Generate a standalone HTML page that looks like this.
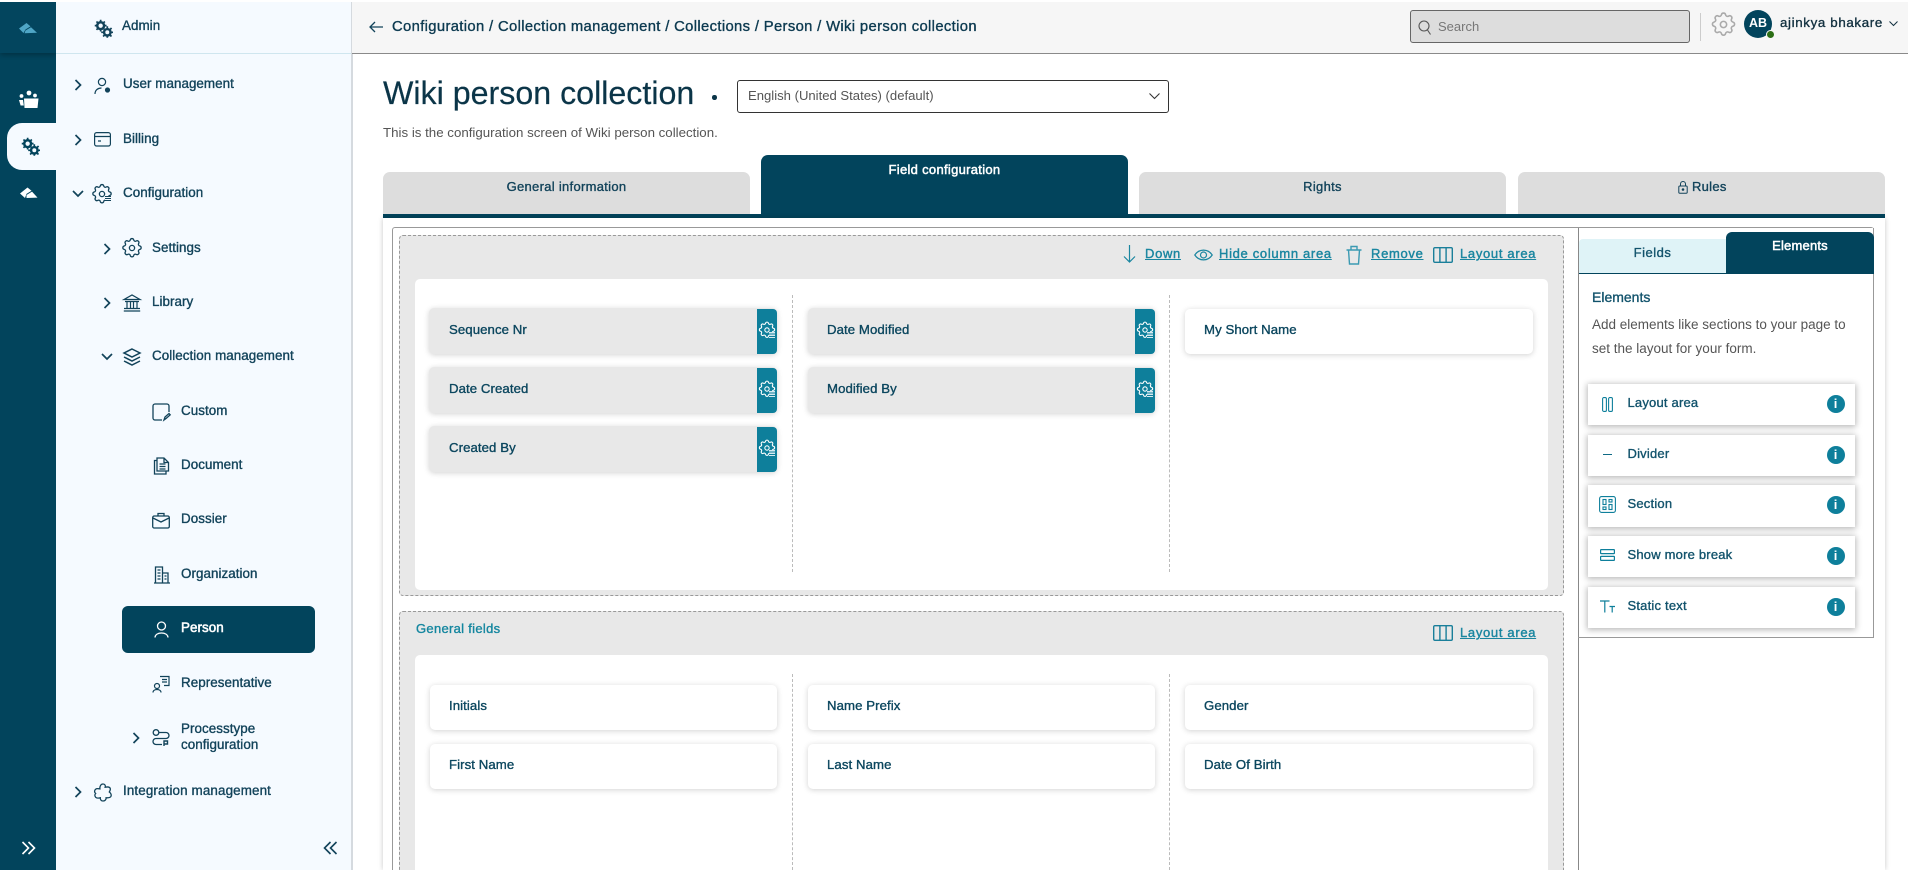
<!DOCTYPE html>
<html><head><meta charset="utf-8"><style>
*{box-sizing:border-box}
html,body{margin:0;padding:0;width:1908px;height:870px;overflow:hidden;background:#fff}
body{position:relative;font-family:"Liberation Sans",sans-serif;color:#0b465e}
.a{position:absolute}
.t{position:absolute;white-space:nowrap;line-height:20px;height:20px;-webkit-text-stroke:.35px currentColor}
.n{font-size:13.4px;color:#12435a;letter-spacing:.05px;margin-top:1px}
svg{position:absolute;overflow:visible;fill:none}
.fc{position:absolute;height:45px;background:#fff;border-radius:5px;box-shadow:0 1px 6px rgba(0,0,0,.18)}
.fc.g{background:#e8e8e8;height:46px}
.fc span{position:absolute;left:19px;top:11px;line-height:20px;font-size:13.2px;letter-spacing:.08px;color:#0b465e;-webkit-text-stroke:.35px currentColor;white-space:nowrap}
.fc.g span{left:20px;top:12px}
.st{position:absolute;right:0;top:1px;width:20px;height:45px;background:#0e7f9b;border-radius:0 4px 4px 0}
.st svg{left:-.5px;top:10.5px;color:#fff}
.st b{position:absolute;left:12px;top:23px;width:6px;height:6px;background:repeating-linear-gradient(#d5e9f0 0 1px,#0e7f9b 1px 1.6px)}
.ec{position:absolute;left:1588px;width:267px;height:41px;background:#fff;box-shadow:0 1px 6px 1px rgba(0,0,0,.28)}
.ec span{position:absolute;left:39.5px;top:9px;line-height:20px;font-size:13px;letter-spacing:.2px;color:#12536c;-webkit-text-stroke:.35px currentColor;white-space:nowrap}
.ec i{position:absolute;left:238.5px;top:11px;width:18px;height:18px;border-radius:50%;background:#0e7f9b;color:#fff;font:normal bold 13px/18px "Liberation Sans",sans-serif;text-align:center}
.tab{position:absolute;background:#ddd;border-radius:7px 7px 0 0;text-align:center;font-size:13px;letter-spacing:.3px;line-height:20px;color:#12435a;-webkit-text-stroke:.35px currentColor}
.lnk{position:absolute;white-space:nowrap;font-size:13px;line-height:20px;color:#1a86a0;text-decoration:underline;-webkit-text-stroke:.4px currentColor;letter-spacing:.68px}
.dash{position:absolute;border-left:1px dashed #bbb;width:0}
</style></head><body>
<svg width="0" height="0" style="position:absolute"><defs>
<symbol id="gear" viewBox="0 0 24 24"><path d="M10.3 3.9c.4-1.8 3-1.8 3.4 0a1.7 1.7 0 0 0 2.6 1.1c1.5-.9 3.3.8 2.4 2.4a1.7 1.7 0 0 0 1.1 2.6c1.8.4 1.8 3 0 3.4a1.7 1.7 0 0 0-1.1 2.6c.9 1.5-.8 3.3-2.4 2.4a1.7 1.7 0 0 0-2.6 1.1c-.4 1.8-3 1.8-3.4 0a1.7 1.7 0 0 0-2.6-1.1c-1.5.9-3.3-.8-2.4-2.4a1.7 1.7 0 0 0-1.1-2.6c-1.8-.4-1.8-3 0-3.4a1.7 1.7 0 0 0 1.1-2.6c-.9-1.5.8-3.3 2.4-2.4a1.7 1.7 0 0 0 2.6-1.1z" stroke="currentColor" stroke-width="1.3" fill="none"/><circle cx="12" cy="12" r="2.6" stroke="currentColor" stroke-width="1.3" fill="none"/></symbol>
<symbol id="gears" viewBox="0 0 20 20"><g stroke="currentColor" stroke-width="2.6" fill="none"><circle cx="7" cy="7" r="3.6"/><circle cx="14" cy="14" r="3.4"/><path stroke-width="1.8" d="M7 .8v2M7 11v2.2M.8 7h2M11.2 7h2M2.6 2.6l1.4 1.4M10 10l1.4 1.4M11.4 2.6L10 4M4 10l-1.4 1.4M14 7.6v2M14 18v1.8M7.6 14h2M18.4 14h1.6M9.5 9.5l1.4 1.4M17 17l1.4 1.4M18.5 9.5L17 11M11 17l-1.4 1.4"/></g></symbol>
<symbol id="lay" viewBox="0 0 20 16"><rect x=".7" y=".7" width="18.6" height="14.6" rx="1.2" stroke="currentColor" stroke-width="1.4" fill="none"/><path d="M6.9 1v14M13.1 1v14" stroke="currentColor" stroke-width="1.4"/></symbol>
</defs></svg>

<!-- rail -->
<div class="a" style="left:0;top:2px;width:56px;height:868px;background:#02445c"></div>
<div class="a" style="left:0;top:2px;width:56px;height:51px;background:#03455e;box-shadow:0 2px 5px rgba(0,0,0,.28)"></div>
<svg style="left:18px;top:22px" width="20" height="12" viewBox="0 0 20 12"><path d="M1 6.5L8.5 1l4 3.4L7.5 7.5 5.5 11z" fill="#4fa6c6"/><path d="M7.5 8.5l5.5-3.2 6 5.4-12.500.6z" fill="#4fa6c6"/></svg>
<svg style="left:18px;top:90px" width="21" height="19" viewBox="0 0 21 19"><circle cx="11" cy="3" r="2.4" fill="#fff"/><circle cx="3.5" cy="6" r="1.9" fill="#fff"/><circle cx="17" cy="5.5" r="1.9" fill="#fff"/><path d="M6 8.5h14.5l-1 9.5H6.5zM1 10h4l.8 5.5H2.600z" fill="#fff"/></svg>
<div class="a" style="left:7px;top:123px;width:49px;height:47px;background:#f5faff;border-radius:15px 0 0 15px"></div>
<svg style="left:21px;top:137px;color:#02445c" width="19" height="19"><use href="#gears"/></svg>
<svg style="left:19px;top:186px" width="19" height="13" viewBox="0 0 19 13"><path d="M1 7.5L8.5 1.5l4 3.2-5 3.2L6 12z" fill="#fff"/><path d="M7.5 9l5.5-3.4 5.500 6-11 .4z" fill="#fff"/></svg>
<svg style="left:21px;top:841px" width="15" height="14" viewBox="0 0 15 14" stroke="#fff" stroke-width="1.6"><path d="M1.5 1l6 6-6 6M7.5 1l6 6-6 6"/></svg>

<!-- nav -->
<div class="a" style="left:56px;top:2px;width:295px;height:868px;background:#f5faff"></div>
<div class="a" style="left:56px;top:53px;width:295px;height:1px;background:#cfe6ef"></div>
<div class="a" style="left:351px;top:2px;width:1.5px;height:868px;background:#d5dadf"></div>

<svg style="left:94px;top:19px;color:#12435a" width="19" height="19"><use href="#gears"/></svg>
<div class="t n" style="left:122px;top:15px">Admin</div>

<svg style="left:74px;top:79px" width="8" height="12" stroke="#12435a" stroke-width="1.7"><path d="M1.5 1l5 5-5 5"/></svg>
<svg style="left:94px;top:77px" width="18" height="18" viewBox="0 0 18 18" stroke="#12435a" stroke-width="1.2"><circle cx="8" cy="5" r="3.6"/><path d="M1 17c0-4 3-6 6.5-6"/><circle cx="13.5" cy="13" r="2" fill="#12435a"/></svg>
<div class="t n" style="left:123px;top:73px">User management</div>

<svg style="left:74px;top:134px" width="8" height="12" stroke="#12435a" stroke-width="1.7"><path d="M1.5 1l5 5-5 5"/></svg>
<svg style="left:94px;top:132px" width="17" height="15" viewBox="0 0 17 15" stroke="#12435a" stroke-width="1.2"><rect x=".6" y=".6" width="15.8" height="13.4" rx="2"/><path d="M1 4.5h15M4 9h3"/></svg>
<div class="t n" style="left:123px;top:128px">Billing</div>

<svg style="left:72px;top:190px" width="12" height="8" stroke="#12435a" stroke-width="1.7"><path d="M1 1l5 5 5-5"/></svg>
<svg style="left:90px;top:182px;color:#12435a" width="24" height="24"><use href="#gear"/></svg>
<div class="a" style="left:105px;top:196px;width:6px;height:6px;background:repeating-linear-gradient(#12435a 0 1px,#f5faff 1px 2px)"></div>
<div class="t n" style="left:123px;top:182px">Configuration</div>

<svg style="left:103px;top:243px" width="8" height="12" stroke="#12435a" stroke-width="1.7"><path d="M1.5 1l5 5-5 5"/></svg>
<svg style="left:120px;top:236px;color:#12435a" width="24" height="24"><use href="#gear"/></svg>
<div class="t n" style="left:152px;top:237px">Settings</div>

<svg style="left:103px;top:297px" width="8" height="12" stroke="#12435a" stroke-width="1.7"><path d="M1.5 1l5 5-5 5"/></svg>
<svg style="left:123px;top:294px" width="18" height="18" viewBox="0 0 18 18" stroke="#12435a" stroke-width="1.2"><path d="M1 5.5L9 1l8 4.5zM2 7.5h14M4 8v6M7.5 8v6M10.5 8v6M14 8v6M1 14.5h16M.8 17h16.4" /></svg>
<div class="t n" style="left:152px;top:291px">Library</div>

<svg style="left:101px;top:353px" width="12" height="8" stroke="#12435a" stroke-width="1.7"><path d="M1 1l5 5 5-5"/></svg>
<svg style="left:123px;top:348px" width="18" height="18" viewBox="0 0 18 18" stroke="#12435a" stroke-width="1.5"><path d="M9 1l8 4-8 4-8-4zM1 9l8 4 8-4M1 13l8 4 8-4"/></svg>
<div class="t n" style="left:152px;top:345px">Collection management</div>

<svg style="left:152px;top:403px" width="19" height="18" viewBox="0 0 19 18" stroke="#12435a" stroke-width="1.3"><path d="M17 9V3a2 2 0 0 0-2-2H3a2 2 0 0 0-2 2v12a2 2 0 0 0 2 2h7"/><path d="M12 17l1-3 4-3.5 1.2 1.3-4 3.6z"/></svg>
<div class="t n" style="left:181px;top:400px">Custom</div>

<svg style="left:153px;top:457px" width="17" height="18" viewBox="0 0 17 18" stroke="#12435a" stroke-width="1.3"><path d="M4 1h7l4.5 4.5V14H4zM11 1v4.5h4.5M4 3.5H1.5V17H13v-3M6.5 7h6M6.5 9.5h6M6.5 12h6"/></svg>
<div class="t n" style="left:181px;top:454px">Document</div>

<svg style="left:152px;top:512px" width="18" height="17" viewBox="0 0 18 17" stroke="#12435a" stroke-width="1.3"><rect x=".7" y="4" width="16.6" height="12" rx="1.5"/><path d="M1 6l8 4 8-4M6 4V1.5h6V4"/></svg>
<div class="t n" style="left:181px;top:508px">Dossier</div>

<svg style="left:153px;top:566px" width="17" height="18" viewBox="0 0 17 18" stroke="#12435a" stroke-width="1.3"><path d="M1 17h16M2.5 17V1h7v16M9.5 7h5.500v10M4.500 4h3M4.500 7h3M4.500 10h3M4.500 13h3M11.500 10h2M11.500 13h2"/></svg>
<div class="t n" style="left:181px;top:563px">Organization</div>

<div class="a" style="left:122px;top:606px;width:193px;height:47px;background:#02445c;border-radius:6px"></div>
<svg style="left:154px;top:621px" width="15" height="17" viewBox="0 0 15 17" stroke="#fff" stroke-width="1.3"><circle cx="7.500" cy="5" r="4"/><path d="M1 16.500c0-6 13-6 13 0"/></svg>
<div class="t n" style="left:181px;top:617px;color:#fff;-webkit-text-stroke:.55px #fff">Person</div>

<svg style="left:152px;top:675px" width="18" height="18" viewBox="0 0 18 18" stroke="#12435a" stroke-width="1.2"><path d="M8 1.500h9v9h-5M10 4.500h5M10 7h5"/><circle cx="5" cy="11" r="2.500"/><path d="M1 17.500c0-4 8-4 8 0"/></svg>
<div class="t n" style="left:181px;top:672px">Representative</div>

<svg style="left:132px;top:732px" width="8" height="12" stroke="#12435a" stroke-width="1.7"><path d="M1.500 1l5 5-5 5"/></svg>
<svg style="left:152px;top:729px" width="18" height="18" viewBox="0 0 18 18" stroke="#12435a" stroke-width="1.3"><circle cx="4" cy="3.500" r="2.800"/><path d="M7 3.500h7a3 3 0 0 1 0 6H4a3 3 0 0 0 0 6h6"/><path d="M12 17v-5h3.500v3H12" stroke-width="1.400"/></svg>
<div class="t n" style="left:181px;top:718px">Processtype</div>
<div class="t n" style="left:181px;top:734px">configuration</div>

<svg style="left:74px;top:786px" width="8" height="12" stroke="#12435a" stroke-width="1.7"><path d="M1.500 1l5 5-5 5"/></svg>
<svg style="left:94px;top:783px" width="18" height="19" viewBox="0 0 18 19" stroke="#12435a" stroke-width="1.300"><path d="M9 1c2 0 2.700 1.700 2.200 3.200 1.500-.3 4.300-.7 5 1.100.5 1.300-.3 2.700-.9 3.700 1.300 1 2.200 2.500 1.800 4-.5 2-3.400 1.900-5 1.800.2 1.500-.9 3.200-3 3.200s-3-1.700-2.800-3.200c-1.300.3-3.600.5-4.600-.5S.5 11.500 1.600 10.500c-1.200-1-1.500-3 0-4.300 1.200-1 3-.5 4.300-.3C5.500 3.200 7 1 9 1z"/></svg>
<div class="t n" style="left:123px;top:780px;letter-spacing:.13px">Integration management</div>

<svg style="left:323px;top:841px" width="15" height="14" viewBox="0 0 15 14" stroke="#12435a" stroke-width="1.600"><path d="M7.500 1l-6 6 6 6M13.500 1l-6 6 6 6"/></svg>

<!-- header -->
<div class="a" style="left:352px;top:2px;width:1556px;height:51px;background:#f6f6f6"></div>
<div class="a" style="left:352px;top:53px;width:1556px;height:1px;background:#8a8a8a"></div>
<svg style="left:369px;top:21px" width="14" height="12" viewBox="0 0 14 12" stroke="#12435a" stroke-width="1.300"><path d="M6 1L1 6l5 5M1 6h13"/></svg>
<div class="t" style="left:392px;top:17px;font-size:14.8px;letter-spacing:.35px;color:#0c3a50">Configuration / Collection management / Collections / Person / Wiki person collection</div>
<div class="a" style="left:1410px;top:10px;width:280px;height:33px;background:#ddd;border:1px solid #666;border-radius:3px"></div>
<svg style="left:1418px;top:20px" width="14" height="15" viewBox="0 0 14 15" stroke="#555" stroke-width="1.100"><circle cx="6" cy="6" r="5"/><path d="M9.500 10l3 4.500"/></svg>
<div class="t" style="left:1438px;top:17px;font-size:13px;color:#777;-webkit-text-stroke:0">Search</div>
<div class="a" style="left:1700px;top:13px;width:1px;height:28px;background:#ccc"></div>
<svg style="left:1708.5px;top:10px;color:#aaa" width="29" height="29"><use href="#gear"/></svg>
<div class="a" style="left:1744px;top:10px;width:28px;height:28px;border-radius:50%;background:#02445c;color:#fff;font-size:12.500px;font-weight:bold;line-height:27px;text-align:center">AB</div>
<div class="a" style="left:1766px;top:30px;width:9px;height:9px;border-radius:50%;background:#2c6e14;border:1px solid #f6f6f6"></div>
<div class="t" style="left:1780px;top:13px;font-size:13.300px;letter-spacing:.65px;color:#12303f">ajinkya bhakare</div>
<svg style="left:1889px;top:21px" width="9" height="6" stroke="#12303f" stroke-width="1"><path d="M.5 .5l4 4 4-4"/></svg>

<!-- title -->
<div class="a" style="left:383px;top:74px;font-size:32.200px;line-height:38px;color:#0b3548;white-space:nowrap;-webkit-text-stroke:.2px currentColor">Wiki person collection</div>
<div class="a" style="left:712px;top:95px;width:4.500px;height:4.500px;border-radius:50%;background:#0b3548"></div>
<div class="a" style="left:737px;top:80px;width:432px;height:33px;border:1px solid #333;border-radius:3px;background:#fff"></div>
<div class="t" style="left:748px;top:86px;font-size:13.100px;color:#555;-webkit-text-stroke:0">English (United States) (default)</div>
<svg style="left:1149px;top:93px" width="11" height="7" stroke="#333" stroke-width="1.100"><path d="M.5 .5l5 5 5-5"/></svg>
<div class="t" style="left:383px;top:123px;font-size:13.300px;color:#555;-webkit-text-stroke:0">This is the configuration screen of Wiki person collection.</div>

<!-- tabs -->
<div class="tab" style="left:383px;top:172px;width:367px;height:44px;padding-top:5px">General information</div>
<div class="tab" style="left:761px;top:155px;width:367px;height:61px;padding-top:5px;background:#02445c;color:#fff;-webkit-text-stroke:.5px #fff">Field configuration</div>
<div class="tab" style="left:1139px;top:172px;width:367px;height:44px;padding-top:5px">Rights</div>
<div class="tab" style="left:1518px;top:172px;width:367px;height:44px;padding-top:5px">&nbsp;&nbsp;&nbsp;&nbsp;Rules</div>
<svg style="left:1678px;top:181px" width="10" height="13" viewBox="0 0 10 13" stroke="#12435a" stroke-width="1"><rect x=".8" y="5" width="8.400" height="7.300" rx="1"/><path d="M2.500 5V3a2.500 2.500 0 0 1 5 0v2"/><circle cx="5" cy="8.500" r=".8" fill="#12435a"/></svg>
<div class="a" style="left:383px;top:214px;width:1502px;height:4px;background:#02445c"></div>

<!-- panel -->
<div class="a" style="left:383px;top:218px;width:1502px;height:652px;background:#fff;box-shadow:0 0 5px rgba(0,0,0,.22)"></div>
<div class="a" style="left:392px;top:227px;width:1482px;height:643px;border:1px solid #999;border-bottom:0;border-radius:3px 3px 0 0"></div>

<!-- section 1 -->
<div class="a" style="left:399px;top:235px;width:1165px;height:361px;background:#e8e8e8;border:1px dashed #999;border-radius:4px"></div>
<div class="a" style="left:415px;top:279px;width:1133px;height:311px;background:#fff;border-radius:5px"></div>
<div class="dash" style="left:792px;top:295px;height:277px"></div>
<div class="dash" style="left:1169px;top:295px;height:277px"></div>

<svg style="left:1123px;top:244px" width="13" height="19" viewBox="0 0 13 19" stroke="#1a86a0" stroke-width="1.200"><path d="M6.500 1v17M1 12.500L6.500 18l5.500-5.500"/></svg>
<div class="lnk" style="left:1145px;top:244px">Down</div>
<svg style="left:1194px;top:248px" width="19" height="14" viewBox="0 0 19 14" stroke="#1a86a0" stroke-width="1.200"><path d="M.8 7C5 .5 14 .5 18.200 7 14 13.500 5 13.500 .8 7z"/><circle cx="9.500" cy="7" r="3"/></svg>
<div class="lnk" style="left:1219px;top:244px">Hide column area</div>
<svg style="left:1346px;top:245px" width="16" height="20" viewBox="0 0 16 20" stroke="#3b9ab2" stroke-width="1.400"><path d="M.5 5h15M2.500 5l1 14h9l1-14M5 4.500V1.500h6v3"/></svg>
<div class="lnk" style="left:1371px;top:244px">Remove</div>
<svg style="left:1433px;top:247px;color:#1a7f9a" width="20" height="16"><use href="#lay"/></svg>
<div class="lnk" style="left:1460px;top:244px">Layout area</div>

<div class="fc g" style="left:429px;top:308px;width:348px"><span>Sequence Nr</span><div class="st"><svg width="20" height="20"><use href="#gear"/></svg><b></b></div></div>
<div class="fc g" style="left:429px;top:367px;width:348px"><span>Date Created</span><div class="st"><svg width="20" height="20"><use href="#gear"/></svg><b></b></div></div>
<div class="fc g" style="left:429px;top:426px;width:348px"><span>Created By</span><div class="st"><svg width="20" height="20"><use href="#gear"/></svg><b></b></div></div>
<div class="fc g" style="left:808px;top:308px;width:347px"><span style="left:19px">Date Modified</span><div class="st"><svg width="20" height="20"><use href="#gear"/></svg><b></b></div></div>
<div class="fc g" style="left:808px;top:367px;width:347px"><span style="left:19px">Modified By</span><div class="st"><svg width="20" height="20"><use href="#gear"/></svg><b></b></div></div>
<div class="fc" style="left:1185px;top:309px;width:348px"><span>My Short Name</span></div>

<!-- section 2 -->
<div class="a" style="left:399px;top:611px;width:1165px;height:300px;background:#e8e8e8;border:1px dashed #999;border-radius:4px"></div>
<div class="t" style="left:416px;top:619px;font-size:13px;color:#14869f;letter-spacing:.3px">General fields</div>
<svg style="left:1433px;top:625px;color:#1a7f9a" width="20" height="16"><use href="#lay"/></svg>
<div class="lnk" style="left:1460px;top:623px">Layout area</div>
<div class="a" style="left:415px;top:655px;width:1133px;height:230px;background:#fff;border-radius:5px"></div>
<div class="dash" style="left:792px;top:674px;height:196px"></div>
<div class="dash" style="left:1169px;top:674px;height:196px"></div>
<div class="fc" style="left:430px;top:685px;width:347px"><span>Initials</span></div>
<div class="fc" style="left:430px;top:744px;width:347px"><span>First Name</span></div>
<div class="fc" style="left:808px;top:685px;width:347px"><span>Name Prefix</span></div>
<div class="fc" style="left:808px;top:744px;width:347px"><span>Last Name</span></div>
<div class="fc" style="left:1185px;top:685px;width:348px"><span>Gender</span></div>
<div class="fc" style="left:1185px;top:744px;width:348px"><span>Date Of Birth</span></div>

<!-- right panel -->
<div class="a" style="left:1578px;top:228px;width:296px;height:642px;background:#fff;border-left:1px solid #888"></div>
<div class="a" style="left:1578px;top:637px;width:296px;height:1px;background:#999"></div>
<div class="a" style="left:1873px;top:228px;width:1px;height:410px;background:#999"></div>
<div class="a" style="left:1873px;top:638px;width:12px;height:232px;background:#fff"></div>
<div class="a" style="left:1579px;top:239px;width:147px;height:35px;background:#dff3f7;border-bottom:1px solid #02445c;border-radius:4px 0 0 0;font-size:13px;line-height:20px;text-align:center;padding-top:4px;color:#12536c;letter-spacing:.5px;-webkit-text-stroke:.35px currentColor">Fields</div>
<div class="a" style="left:1726px;top:232px;width:148px;height:42px;background:#02445c;border-radius:6px 6px 0 0;font-size:13px;line-height:20px;text-align:center;padding-top:4px;color:#fff;letter-spacing:.2px;-webkit-text-stroke:.5px #fff">Elements</div>
<div class="t" style="left:1592px;top:287px;font-size:14px;color:#12536c">Elements</div>
<div class="t" style="left:1592px;top:315px;font-size:13.5px;color:#555;-webkit-text-stroke:0">Add elements like sections to your page to</div>
<div class="t" style="left:1592px;top:339px;font-size:13.5px;color:#555;-webkit-text-stroke:0">set the layout for your form.</div>

<div class="ec" style="top:384px"><span>Layout area</span><i>i</i><svg style="left:14px;top:13px" width="11" height="15" viewBox="0 0 11 15" stroke="#0e7f9b" stroke-width="1.100"><rect x=".6" y=".6" width="3.800" height="13.800" rx="1.200"/><rect x="6.600" y=".6" width="3.800" height="13.800" rx="1.200"/></svg></div>
<div class="ec" style="top:435px"><span>Divider</span><i>i</i><div class="a" style="left:15px;top:19px;width:9px;height:1px;background:#0e6a85"></div></div>
<div class="ec" style="top:485px;height:42px"><span>Section</span><i>i</i><svg style="left:11px;top:11px" width="17" height="17" viewBox="0 0 17 17" stroke="#0e7f9b" stroke-width="1.100"><rect x=".6" y=".6" width="15.800" height="15.800" rx="2"/><rect x="4" y="3.500" width="3" height="5"/><rect x="10" y="3.500" width="3" height="2.500"/><rect x="4" y="11" width="3" height="2.500"/><rect x="10" y="8.500" width="3" height="5"/></svg></div>
<div class="ec" style="top:536px"><span>Show more break</span><i>i</i><svg style="left:12px;top:13px" width="15" height="12" viewBox="0 0 15 12" stroke="#0e7f9b" stroke-width="1.200"><rect x=".6" y=".6" width="13.800" height="4" rx=".5"/><rect x=".6" y="7.400" width="13.800" height="4" rx=".5"/></svg></div>
<div class="ec" style="top:587px"><span>Static text</span><i>i</i><svg style="left:12px;top:13px" width="15" height="13" viewBox="0 0 15 13" stroke="#0e7f9b" stroke-width="1.200"><path d="M0 1h9.500M4.800 1v11.500M9.500 6.500H15M12.200 6.500v6"/></svg></div>

<div class="a" style="left:0;top:0;width:1908px;height:2px;background:#fff"></div>
</body></html>
